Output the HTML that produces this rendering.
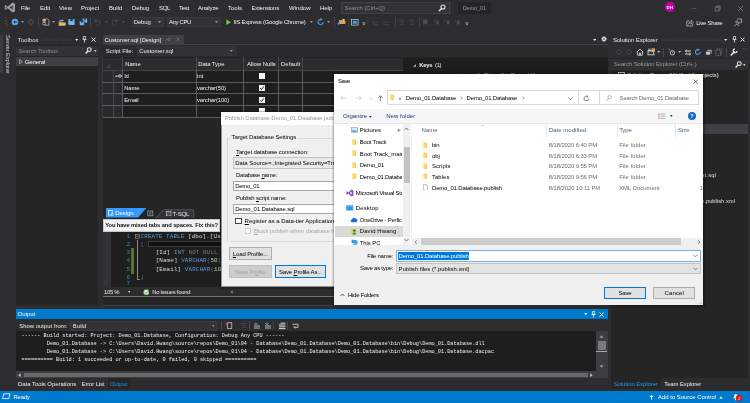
<!DOCTYPE html>
<html lang="en"><head><meta charset="utf-8"><title>Visual Studio - Save</title>
<style>
html,body{margin:0;padding:0;}
body{width:750px;height:403px;overflow:hidden;background:#2d2d30;position:relative;font-family:"Liberation Sans",sans-serif;}
#r{position:absolute;left:0;top:0;width:750px;height:403px;overflow:hidden;will-change:transform;}
#r div,#r svg,#r span.t{position:absolute;}
span.t{white-space:pre;}
span.t u{text-decoration-thickness:0.5px;text-underline-offset:0.6px;}
.s{font-family:"Liberation Sans",sans-serif;}
.m{font-family:"Liberation Mono",monospace;}
</style></head>
<body><div id="r">
<svg style="left:4px;top:2px;" width="12" height="11" viewBox="0 0 12 11"><path d="M8.6 0.6 L11 1.7 V9.3 L8.6 10.4 L3.6 6.3 L1.6 7.9 L0.8 7.5 V3.5 L1.6 3.1 L3.6 4.7 Z M8.6 3.4 L5.6 5.5 L8.6 7.6 Z M1.7 4.4 V6.6 L2.9 5.5 Z" fill="#9b9ba3" fill-rule="evenodd"/></svg>
<span class="t s" style="left:21px;top:4px;font-size:6.01px;line-height:8px;color:#f0f0f0;letter-spacing:-0.168px;">File</span>
<span class="t s" style="left:40px;top:4px;font-size:6.01px;line-height:8px;color:#f0f0f0;letter-spacing:-0.086px;">Edit</span>
<span class="t s" style="left:59px;top:4px;font-size:6.01px;line-height:8px;color:#f0f0f0;letter-spacing:0.023px;">View</span>
<span class="t s" style="left:81px;top:4px;font-size:6.01px;line-height:8px;color:#f0f0f0;letter-spacing:-0.098px;">Project</span>
<span class="t s" style="left:109px;top:4px;font-size:6.01px;line-height:8px;color:#f0f0f0;letter-spacing:-0.069px;">Build</span>
<span class="t s" style="left:132px;top:4px;font-size:6.01px;line-height:8px;color:#f0f0f0;letter-spacing:-0.138px;">Debug</span>
<span class="t s" style="left:159px;top:4px;font-size:6.01px;line-height:8px;color:#f0f0f0;letter-spacing:-0.339px;">SQL</span>
<span class="t s" style="left:179px;top:4px;font-size:6.01px;line-height:8px;color:#f0f0f0;letter-spacing:-0.254px;">Test</span>
<span class="t s" style="left:198px;top:4px;font-size:6.01px;line-height:8px;color:#f0f0f0;letter-spacing:-0.123px;">Analyze</span>
<span class="t s" style="left:228px;top:4px;font-size:6.01px;line-height:8px;color:#f0f0f0;letter-spacing:-0.003px;">Tools</span>
<span class="t s" style="left:251.5px;top:4px;font-size:6.01px;line-height:8px;color:#f0f0f0;letter-spacing:-0.186px;">Extensions</span>
<span class="t s" style="left:289px;top:4px;font-size:6.01px;line-height:8px;color:#f0f0f0;letter-spacing:0.026px;">Window</span>
<span class="t s" style="left:320px;top:4px;font-size:6.01px;line-height:8px;color:#f0f0f0;letter-spacing:-0.086px;">Help</span>
<div style="left:341px;top:2px;width:109px;height:11.5px;background:#333337;border:0.6px solid #404044;box-sizing:border-box;"></div>
<span class="t s" style="left:344.5px;top:4px;font-size:6.01px;line-height:8px;color:#8f8f8f;letter-spacing:-0.113px;">Search (Ctrl+Q)</span>
<svg style="left:438px;top:4px;" width="8" height="8" viewBox="0 0 8 8"><circle cx="5" cy="3" r="2" fill="none" stroke="#e8e8e8" stroke-width="1.1"/><path d="M3.6 4.4 L1 7" stroke="#e8e8e8" stroke-width="1.4"/></svg>
<div style="left:458px;top:2px;width:32.5px;height:11.5px;background:#252527;"></div>
<span class="t s" style="left:462.5px;top:4px;font-size:5.82px;line-height:8px;color:#9a9a9a;letter-spacing:-0.243px;">Demo_01</span>
<div style="left:664.5px;top:1.8px;width:10.4px;height:10.4px;background:#c200aa;border-radius:50%;"></div>
<span class="t s" style="left:666.6px;top:4px;font-size:4.4px;line-height:8px;color:#ffffff;font-weight:bold;letter-spacing:0.028px;">DH</span>
<svg style="left:690px;top:3.5px;" width="8" height="9" viewBox="0 0 8 9"><path d="M1.5 4.5 H6.5" stroke="#5a5a5e" stroke-width="0.8"/></svg>
<svg style="left:713px;top:3.6px;" width="9" height="9" viewBox="0 0 9 9"><path d="M2.2 3.2 H6 V7 H2.2 Z M3.4 3.2 V2 H7.2 V5.8 H6" fill="none" stroke="#8a8a8e" stroke-width="0.7"/></svg>
<svg style="left:736px;top:3.8px;" width="9" height="9" viewBox="0 0 9 9"><path d="M2 2 L7 7 M7 2 L2 7" stroke="#8a8a8e" stroke-width="0.7"/></svg>
<svg style="left:5px;top:17px;" width="3" height="10" viewBox="0 0 3 10"><g fill="#55555a"><rect x="0" y="0" width="1" height="1"/><rect x="1.5" y="1.5" width="1" height="1"/><rect x="0" y="3" width="1" height="1"/><rect x="1.5" y="4.5" width="1" height="1"/><rect x="0" y="6" width="1" height="1"/><rect x="1.5" y="7.5" width="1" height="1"/></g></svg>
<svg style="left:10.6px;top:17.6px;" width="8" height="8" viewBox="0 0 8 8"><circle cx="4" cy="4" r="3.3" fill="#58aaf0"/><path d="M4 2.3 L2.3 4 L4 5.7 Z" fill="#23272e"/><path d="M3.6 4 H6.2" stroke="#23272e" stroke-width="0.9"/></svg>
<svg style="left:21.1px;top:20.900000000000002px;" width="3" height="2.1" viewBox="0 0 3 2.1"><path d="M0 0 H3 L1.5 2 Z" fill="#9a9a9a"/></svg>
<svg style="left:27.5px;top:18.7px;" width="6" height="6" viewBox="0 0 6 6"><circle cx="3" cy="3" r="2.2" fill="none" stroke="#55555a" stroke-width="1"/></svg>
<div style="left:38px;top:17px;width:0.7px;height:10px;background:#424246;"></div>
<svg style="left:41.5px;top:17.8px;" width="8" height="9" viewBox="0 0 8 9"><path d="M3.4 0.9 H5.6 L6.9 2.2 V7.2 H2.6 V4" fill="none" stroke="#c8c8c8" stroke-width="0.7"/><circle cx="2.2" cy="2.2" r="1.7" fill="#e0ac62"/><rect x="0.8" y="4.6" width="2.4" height="2.2" fill="#2d2d30" stroke="#c0c0c0" stroke-width="0.6"/></svg>
<svg style="left:51.7px;top:20.900000000000002px;" width="3" height="2.1" viewBox="0 0 3 2.1"><path d="M0 0 H3 L1.5 2 Z" fill="#9a9a9a"/></svg>
<svg style="left:57.5px;top:18px;" width="9" height="9" viewBox="0 0 9 9"><path d="M0.6 3.4 H3 L3.8 4.2 H7.4 V7.6 H0.6 Z" fill="#c8963e"/><path d="M1.8 5.2 H8.2 L7.2 7.6 H0.6 Z" fill="#e6bd78"/><path d="M1.4 3.2 V2 H3.8 V0.9 L5.8 2.5 L3.8 4.1 V3 H2.4 V3.2 Z" fill="#5fb0f5"/></svg>
<svg style="left:68.4px;top:18.8px;" width="7" height="6.4" viewBox="0 0 7 6.4"><path d="M0.2 0.3 H6.6 V6 H1.2 L0.2 5 Z" fill="#6ab8f7"/><rect x="2.2" y="0.3" width="2.6" height="1.7" fill="#2d2d30"/></svg>
<svg style="left:78.5px;top:18px;" width="9" height="8.4" viewBox="0 0 9 8.4"><path d="M3.6 0.5 H8.2 V4.6 H3.6 Z" fill="#6ab8f7"/><rect x="5" y="0.5" width="1.9" height="1.3" fill="#2d2d30"/><path d="M0.4 2.9 H5.2 V7.6 H1.2 L0.4 6.8 Z" fill="#6ab8f7" stroke="#2d2d30" stroke-width="0.6"/><rect x="1.9" y="3" width="1.9" height="1.4" fill="#2d2d30"/></svg>
<div style="left:90.2px;top:17px;width:0.7px;height:10px;background:#424246;"></div>
<svg style="left:93.5px;top:18px;" width="7" height="8" viewBox="0 0 7 8"><path d="M1 1 V3.4 H3.4 M1.2 3.2 C3 1.2 5.8 2 5.8 4.2 C5.8 5.6 4.8 6.6 3.4 7.2" fill="none" stroke="#505055" stroke-width="0.9"/></svg>
<svg style="left:104.8px;top:20.900000000000002px;" width="3" height="2.1" viewBox="0 0 3 2.1"><path d="M0 0 H3 L1.5 2 Z" fill="#55555a"/></svg>
<svg style="left:111px;top:18px;" width="7" height="8" viewBox="0 0 7 8"><path d="M6 1 V3.4 H3.6 M5.8 3.2 C4 1.2 1.2 2 1.2 4.2 C1.2 5.6 2.2 6.6 3.6 7.2" fill="none" stroke="#505055" stroke-width="0.9"/></svg>
<svg style="left:121.8px;top:20.900000000000002px;" width="3" height="2.1" viewBox="0 0 3 2.1"><path d="M0 0 H3 L1.5 2 Z" fill="#55555a"/></svg>
<div style="left:132px;top:17px;width:32px;height:10px;background:#333337;border:0.5px solid #3a3a3e;box-sizing:border-box;"></div>
<span class="t s" style="left:133.8px;top:18px;font-size:5.92px;line-height:8px;color:#f0f0f0;letter-spacing:-0.121px;">Debug</span>
<svg style="left:158.0px;top:20.900000000000002px;" width="3" height="2.1" viewBox="0 0 3 2.1"><path d="M0 0 H3 L1.5 2 Z" fill="#9a9a9a"/></svg>
<div style="left:167px;top:17px;width:54px;height:10px;background:#333337;border:0.5px solid #3a3a3e;box-sizing:border-box;"></div>
<span class="t s" style="left:169px;top:18px;font-size:5.92px;line-height:8px;color:#f0f0f0;letter-spacing:-0.328px;">Any CPU</span>
<svg style="left:215.0px;top:20.900000000000002px;" width="3" height="2.1" viewBox="0 0 3 2.1"><path d="M0 0 H3 L1.5 2 Z" fill="#9a9a9a"/></svg>
<svg style="left:225.5px;top:18.5px;" width="5.5" height="6.5" viewBox="0 0 5.5 6.5"><path d="M0.3 0.3 L5 3.2 L0.3 6.1 Z" fill="#6cc04a"/></svg>
<span class="t s" style="left:233.5px;top:18px;font-size:5.92px;line-height:8px;color:#f0f0f0;letter-spacing:-0.203px;">IIS Express (Google Chrome)</span>
<svg style="left:309.5px;top:20.900000000000002px;" width="3" height="2.1" viewBox="0 0 3 2.1"><path d="M0 0 H3 L1.5 2 Z" fill="#9a9a9a"/></svg>
<svg style="left:316.5px;top:18px;" width="8" height="8" viewBox="0 0 8 8"><path d="M6.2 4 A2.6 2.6 0 1 1 4 1.4" fill="none" stroke="#4ba0e8" stroke-width="1.1"/><path d="M3.4 0 L5.8 1.5 L3.4 3 Z" fill="#4ba0e8"/></svg>
<svg style="left:326.5px;top:20.900000000000002px;" width="3" height="2.1" viewBox="0 0 3 2.1"><path d="M0 0 H3 L1.5 2 Z" fill="#9a9a9a"/></svg>
<div style="left:333.5px;top:17px;width:0.7px;height:10px;background:#424246;"></div>
<svg style="left:336.5px;top:17.5px;" width="9" height="9" viewBox="0 0 9 9"><path d="M2 2 H5 L5.6 2.8 H8.4 V6 H2 Z" fill="#d9a550"/><path d="M0.6 5 L3 3.4 L3.6 4.6 L1.4 7.4 Z" fill="#4ba0e8"/><circle cx="6.6" cy="2" r="1.2" fill="#e9c27c"/></svg>
<div style="left:347.5px;top:17px;width:0.7px;height:10px;background:#424246;"></div>
<svg style="left:351px;top:18.5px;" width="8" height="7" viewBox="0 0 8 7"><rect x="0.5" y="0.5" width="6.6" height="5.6" fill="none" stroke="#d8d8d8" stroke-width="0.7"/><rect x="1.8" y="1.8" width="4" height="3" fill="#4ba0e8"/></svg>
<svg style="left:361.5px;top:22px;" width="4" height="4" viewBox="0 0 4 4"><path d="M0.5 0.5 H3.3" stroke="#b0b0b0" stroke-width="0.6"/><path d="M0.4 1.6 H3.4 L1.9 3.4 Z" fill="#b0b0b0"/></svg>
<svg style="left:366.5px;top:17px;" width="3" height="10" viewBox="0 0 3 10"><g fill="#4a4a4f"><rect x="0" y="0" width="1" height="1"/><rect x="1.5" y="1.5" width="1" height="1"/><rect x="0" y="3" width="1" height="1"/><rect x="1.5" y="4.5" width="1" height="1"/><rect x="0" y="6" width="1" height="1"/><rect x="1.5" y="7.5" width="1" height="1"/></g></svg>
<svg style="left:372px;top:18.5px;" width="7" height="7" viewBox="0 0 7 7"><path d="M1 1 V5.8 H6.4 M2.4 3.4 H6" fill="none" stroke="#4c4c51" stroke-width="0.8"/></svg>
<svg style="left:383px;top:18.5px;" width="7" height="7" viewBox="0 0 7 7"><path d="M1 1 V5.8 H6.4 M2.4 3.4 H6" fill="none" stroke="#4c4c51" stroke-width="0.8"/></svg>
<div style="left:394.5px;top:17px;width:0.7px;height:10px;background:#424246;"></div>
<svg style="left:398px;top:18.5px;" width="7" height="7" viewBox="0 0 7 7"><path d="M1 1.2 H6 M2.4 3.2 H6 M2.4 5.2 H6" fill="none" stroke="#4c4c51" stroke-width="0.8"/></svg>
<svg style="left:407.5px;top:18.5px;" width="7" height="7" viewBox="0 0 7 7"><path d="M1 1.2 H6 M2.4 3.2 H6 M2.4 5.2 H6" fill="none" stroke="#4c4c51" stroke-width="0.8"/></svg>
<div style="left:419px;top:17px;width:0.7px;height:10px;background:#424246;"></div>
<svg style="left:422px;top:18.5px;" width="7" height="7" viewBox="0 0 7 7"><path d="M1 0.6 H5.4 V6.2 L3.2 4.6 L1 6.2 Z" fill="#4c4c51"/></svg>
<svg style="left:433px;top:18.5px;" width="7" height="7" viewBox="0 0 7 7"><path d="M3 1.4 H5.6 V6 L4.3 5 L3 6 Z" fill="#4c4c51"/><path d="M0.8 1 H2.2 M0.8 2.4 H1.8" stroke="#5a5a5e" stroke-width="0.6"/></svg>
<svg style="left:443.5px;top:18.5px;" width="7" height="7" viewBox="0 0 7 7"><path d="M3 1.4 H5.6 V6 L4.3 5 L3 6 Z" fill="#4c4c51"/><path d="M0.8 1 H2.2 M0.8 2.4 H1.8" stroke="#5a5a5e" stroke-width="0.6"/></svg>
<svg style="left:454px;top:18.5px;" width="7" height="7" viewBox="0 0 7 7"><path d="M3 1.4 H5.6 V6 L4.3 5 L3 6 Z" fill="#4c4c51"/><path d="M0.8 1 H2.2 M0.8 2.4 H1.8" stroke="#5a5a5e" stroke-width="0.6"/></svg>
<svg style="left:464.5px;top:22px;" width="4" height="4" viewBox="0 0 4 4"><path d="M0.5 0.5 H3.3" stroke="#b0b0b0" stroke-width="0.6"/><path d="M0.4 1.6 H3.4 L1.9 3.4 Z" fill="#b0b0b0"/></svg>
<svg style="left:685.5px;top:18.6px;" width="8" height="8" viewBox="0 0 8 8"><path d="M3.4 2 H0.8 V7 H6.4 V5.2" fill="none" stroke="#d0d0d0" stroke-width="0.7"/><path d="M2.6 5.2 C2.8 3.4 4 2.6 5.4 2.6 V1.2 L7.4 3.2 L5.4 5.2 V3.8 C4.2 3.8 3.4 4.2 2.6 5.2 Z" fill="none" stroke="#d0d0d0" stroke-width="0.6"/></svg>
<span class="t s" style="left:696.2px;top:19px;font-size:6.01px;line-height:8px;color:#f0f0f0;letter-spacing:-0.259px;">Live Share</span>
<svg style="left:733.5px;top:18px;" width="9" height="9" viewBox="0 0 9 9"><path d="M3.2 1 H7.6 V4.4 H6 L4.6 5.6 V4.4" fill="none" stroke="#c8c8c8" stroke-width="0.7"/><circle cx="2.8" cy="4" r="1.1" fill="none" stroke="#c8c8c8" stroke-width="0.7"/><path d="M0.8 8 C0.8 6 4.8 6 4.8 8" fill="none" stroke="#c8c8c8" stroke-width="0.7"/></svg>
<div style="left:0px;top:34.7px;width:3.3px;height:38.7px;background:#3a3a3f;"></div>
<span class="t s" style="left:0px;top:-4px;font-size:5.82px;line-height:8px;color:#d4d4d4;left:11.6px;top:35.3px;transform-origin:0 0;transform:rotate(90deg);letter-spacing:-0.1px;">Server Explorer</span>
<div style="left:16.4px;top:34.7px;width:81.9px;height:270px;background:#252526;"></div>
<div style="left:16.4px;top:34.7px;width:81.9px;height:10.6px;background:#2d2d30;"></div>
<span class="t s" style="left:17.7px;top:36px;font-size:6.01px;line-height:8px;color:#e0e0e0;letter-spacing:0.030px;">Toolbox</span>
<div style="left:42px;top:38.4px;width:30px;height:2.4px;background:radial-gradient(circle,#46464a 0.35px,transparent 0.5px) 0 0/2.4px 2.4px,radial-gradient(circle,#46464a 0.35px,transparent 0.5px) 1.2px 1.2px/2.4px 2.4px;"></div>
<svg style="left:74.6px;top:38.9px;" width="3.4" height="2.1" viewBox="0 0 3.4 2.1"><path d="M0 0 H3.4 L1.7 2 Z" fill="#e0e0e0"/></svg>
<svg style="left:81.8px;top:36.3px;" width="5" height="7" viewBox="0 0 5 7"><path d="M1.4 0.6 H3.6 V3.4 H1.4 Z M0.6 3.6 H4.4 M2.5 3.6 V6.6" fill="none" stroke="#e0e0e0" stroke-width="0.8"/></svg>
<svg style="left:90.6px;top:37.3px;" width="5.2" height="5.2" viewBox="0 0 5.2 5.2"><path d="M0.6 0.6 L4.6000000000000005 4.6000000000000005 M4.6000000000000005 0.6 L0.6 4.6000000000000005" stroke="#e0e0e0" stroke-width="1"/></svg>
<div style="left:16.4px;top:45.6px;width:81.9px;height:10.2px;background:#333337;"></div>
<span class="t s" style="left:18.2px;top:47px;font-size:5.92px;line-height:8px;color:#8a8a8a;letter-spacing:-0.058px;">Search Toolbox</span>
<svg style="left:84.5px;top:47.3px;" width="7" height="7" viewBox="0 0 7 7"><circle cx="4.3" cy="2.6" r="1.9" fill="none" stroke="#e8e8e8" stroke-width="1.1"/><path d="M3 3.9 L0.6 6.4" stroke="#e8e8e8" stroke-width="1.4"/></svg>
<svg style="left:94.0px;top:49.9px;" width="2.6" height="2.1" viewBox="0 0 2.6 2.1"><path d="M0 0 H2.6 L1.3 2 Z" fill="#d0d0d0"/></svg>
<div style="left:16.4px;top:57px;width:81.9px;height:9.2px;background:#3f3f46;"></div>
<svg style="left:18.8px;top:59px;" width="4" height="5.4" viewBox="0 0 4 5.4"><path d="M0.5 0.5 L3.3 2.7 L0.5 4.9 Z" fill="none" stroke="#d0d0d0" stroke-width="0.6"/></svg>
<span class="t s" style="left:24.8px;top:58px;font-size:6.01px;line-height:8px;color:#f6f6f6;letter-spacing:-0.137px;">General</span>
<div style="left:102.7px;top:34.7px;width:81.3px;height:9.3px;background:#3f3f46;"></div>
<span class="t s" style="left:104.6px;top:36px;font-size:6.01px;line-height:8px;color:#f0f0f0;letter-spacing:-0.110px;">Customer.sql [Design]</span>
<svg style="left:166.3px;top:37px;" width="5" height="5" viewBox="0 0 5 5"><path d="M0.4 2.4 H2 M2 1 V3.8 M2 1.4 H4.2 V3.4 H2" fill="none" stroke="#77777c" stroke-width="0.6"/></svg>
<svg style="left:175.6px;top:37.4px;" width="4.6" height="4.6" viewBox="0 0 4.6 4.6"><path d="M0.6 0.6 L4.0 4.0 M4.0 0.6 L0.6 4.0" stroke="#77777c" stroke-width="0.7"/></svg>
<div style="left:102.7px;top:43.7px;width:505px;height:0.8px;background:#3f3f46;"></div>
<svg style="left:593.0px;top:38.9px;" width="3.4" height="2.1" viewBox="0 0 3.4 2.1"><path d="M0 0 H3.4 L1.7 2 Z" fill="#e0e0e0"/></svg>
<svg style="left:601.2px;top:36.4px;" width="6" height="6" viewBox="0 0 6 6"><circle cx="3" cy="3" r="1.5" fill="none" stroke="#e4e4e4" stroke-width="1.3"/><circle cx="3" cy="3" r="2.4" fill="none" stroke="#e4e4e4" stroke-width="0.7" stroke-dasharray="0.9 0.7"/></svg>
<div style="left:102.7px;top:44.5px;width:505px;height:12.3px;background:#2b2b2e;"></div>
<span class="t s" style="left:105.8px;top:47px;font-size:6.01px;line-height:8px;color:#ececec;letter-spacing:-0.095px;">Script File:</span>
<div style="left:137px;top:46px;width:99.5px;height:10px;background:#333337;"></div>
<span class="t s" style="left:139.3px;top:47px;font-size:5.82px;line-height:8px;color:#ececec;letter-spacing:0.007px;">Customer.sql</span>
<svg style="left:230.2px;top:50.1px;" width="2.8" height="2.1" viewBox="0 0 2.8 2.1"><path d="M0 0 H2.8 L1.4 2 Z" fill="#9a9a9a"/></svg>
<div style="left:102.7px;top:57px;width:300.5px;height:151px;background:#252526;"></div>
<div style="left:403.2px;top:57px;width:204.5px;height:151px;background:#1d1d1e;"></div>
<div style="left:102.7px;top:57px;width:300.5px;height:13.3px;background:#2c2c2f;"></div>
<div style="left:102.7px;top:56.5px;width:505px;height:0.8px;background:#232325;"></div>
<svg style="left:105px;top:62.5px;" width="6" height="6" viewBox="0 0 6 6"><path d="M5 0.6 V5 H0.6 Z" fill="#3f3f44"/></svg>
<div style="left:123px;top:70.3px;width:280.2px;height:46.7px;background:#1e1e1e;"></div>
<div style="left:102.7px;top:70.3px;width:20.3px;height:46.7px;background:#2a2a2c;"></div>
<div style="left:102.7px;top:69.8px;width:300.5px;height:0.9px;background:#454547;"></div>
<div style="left:102.7px;top:81.5px;width:300.5px;height:0.9px;background:#5d5d5f;"></div>
<div style="left:102.7px;top:93.3px;width:300.5px;height:0.9px;background:#5d5d5f;"></div>
<div style="left:102.7px;top:105.1px;width:300.5px;height:0.9px;background:#5d5d5f;"></div>
<div style="left:102.7px;top:116.6px;width:300.5px;height:0.9px;background:#5d5d5f;"></div>
<div style="left:112.5px;top:70.2px;width:0.9px;height:46.8px;background:#4a4a4d;"></div>
<div style="left:122.19999999999999px;top:57px;width:0.9px;height:13.2px;background:#48484a;"></div>
<div style="left:122.19999999999999px;top:70.2px;width:0.9px;height:46.8px;background:#5d5d5f;"></div>
<div style="left:195.5px;top:57px;width:0.9px;height:13.2px;background:#48484a;"></div>
<div style="left:195.5px;top:70.2px;width:0.9px;height:46.8px;background:#5d5d5f;"></div>
<div style="left:243.2px;top:57px;width:0.9px;height:13.2px;background:#48484a;"></div>
<div style="left:243.2px;top:70.2px;width:0.9px;height:46.8px;background:#5d5d5f;"></div>
<div style="left:278.0px;top:57px;width:0.9px;height:13.2px;background:#48484a;"></div>
<div style="left:278.0px;top:70.2px;width:0.9px;height:46.8px;background:#5d5d5f;"></div>
<div style="left:302.0px;top:57px;width:0.9px;height:13.2px;background:#48484a;"></div>
<div style="left:302.0px;top:70.2px;width:0.9px;height:46.8px;background:#5d5d5f;"></div>
<div style="left:102.4px;top:57px;width:0.7px;height:60px;background:#3c3c3f;"></div>
<span class="t s" style="left:125.2px;top:60px;font-size:5.92px;line-height:8px;color:#f0f0f0;letter-spacing:-0.066px;">Name</span>
<span class="t s" style="left:198.2px;top:60px;font-size:5.92px;line-height:8px;color:#f0f0f0;letter-spacing:-0.070px;">Data Type</span>
<span class="t s" style="left:247px;top:60px;font-size:5.92px;line-height:8px;color:#f0f0f0;letter-spacing:-0.008px;">Allow Nulls</span>
<span class="t s" style="left:280.8px;top:60px;font-size:5.92px;line-height:8px;color:#f0f0f0;letter-spacing:0.140px;">Default</span>
<svg style="left:115px;top:73.8px;" width="7" height="4" viewBox="0 0 7 4"><circle cx="5" cy="2" r="1.3" fill="none" stroke="#e0e0e0" stroke-width="0.9"/><path d="M0.4 2 H3.8 M1.2 2 V3.2" stroke="#e0e0e0" stroke-width="0.8"/></svg>
<span class="t s" style="left:124.2px;top:72px;font-size:5.92px;line-height:8px;color:#f0f0f0;letter-spacing:-0.269px;">Id</span>
<span class="t s" style="left:124.2px;top:84px;font-size:5.92px;line-height:8px;color:#f0f0f0;letter-spacing:-0.116px;">Name</span>
<span class="t s" style="left:124.2px;top:96px;font-size:5.92px;line-height:8px;color:#f0f0f0;letter-spacing:-0.076px;">Email</span>
<span class="t s" style="left:197px;top:72px;font-size:5.92px;line-height:8px;color:#f0f0f0;letter-spacing:0.117px;">int</span>
<span class="t s" style="left:197px;top:84px;font-size:5.92px;line-height:8px;color:#f0f0f0;letter-spacing:-0.118px;">varchar(50)</span>
<span class="t s" style="left:197px;top:96px;font-size:5.92px;line-height:8px;color:#f0f0f0;letter-spacing:-0.115px;">varchar(100)</span>
<svg style="left:258.6px;top:73.1px;" width="6.2" height="6.2" viewBox="0 0 6.2 6.2"><rect x="0" y="0" width="6.2" height="6.2" fill="#f4f4f4"/></svg>
<svg style="left:258.6px;top:85px;" width="6.2" height="6.2" viewBox="0 0 6.2 6.2"><rect x="0" y="0" width="6.2" height="6.2" fill="#f4f4f4"/><path d="M1.3 3.1 L2.6 4.5 L4.9 1.3" fill="none" stroke="#1a1a1a" stroke-width="0.9"/></svg>
<svg style="left:258.6px;top:96.7px;" width="6.2" height="6.2" viewBox="0 0 6.2 6.2"><rect x="0" y="0" width="6.2" height="6.2" fill="#f4f4f4"/><path d="M1.3 3.1 L2.6 4.5 L4.9 1.3" fill="none" stroke="#1a1a1a" stroke-width="0.9"/></svg>
<svg style="left:258.6px;top:108.4px;" width="6.2" height="6.2" viewBox="0 0 6.2 6.2"><rect x="0" y="0" width="6.2" height="6.2" fill="#f4f4f4"/></svg>
<svg style="left:412.6px;top:63.6px;" width="3" height="3" viewBox="0 0 3 3"><path d="M2.8 0.2 V2.8 H0.2 Z" fill="#d0d0d0"/></svg>
<span class="t s" style="left:419.3px;top:61px;font-size:5.92px;line-height:8px;color:#f0f0f0;font-weight:bold;letter-spacing:-0.306px;">Keys</span>
<span class="t s" style="left:435px;top:61px;font-size:5.92px;line-height:8px;color:#ececec;letter-spacing:-0.340px;">(1)</span>
<span class="t s" style="left:457px;top:71px;font-size:5.73px;line-height:8px;color:#b8b8b8;letter-spacing:-0.662px;">&lt;unnamed&gt;  (Primary Key, Clustered: Id)</span>
<div style="left:102.7px;top:208px;width:505px;height:10.4px;background:#252526;"></div>
<svg style="left:106px;top:208.2px;" width="42" height="9.6" viewBox="0 0 42 9.6"><path d="M0 0 H40.4 L32 9.6 H0 Z" fill="#3399ff"/></svg>
<svg style="left:107.6px;top:210px;" width="6" height="6" viewBox="0 0 6 6"><rect x="0.6" y="0.6" width="3.6" height="4.4" fill="none" stroke="#ffffff" stroke-width="0.7"/><circle cx="4.2" cy="4.4" r="1.1" fill="#3399ff" stroke="#fff" stroke-width="0.6"/></svg>
<span class="t s" style="left:115.3px;top:209px;font-size:6.1px;line-height:8px;color:#ffffff;letter-spacing:-0.128px;">Design</span>
<svg style="left:147.2px;top:209.6px;" width="7" height="7" viewBox="0 0 7 7"><rect x="0.8" y="1" width="5" height="4.8" fill="none" stroke="#a8a8a8" stroke-width="0.7"/><path d="M2.4 2.4 L4 2.4 L4 4 M4.2 4.6 L2.6 4.6 L2.6 3.2" fill="none" stroke="#a8a8a8" stroke-width="0.5"/></svg>
<svg style="left:155px;top:208.6px;" width="40" height="9.8" viewBox="0 0 40 9.8"><path d="M0.3 9.6 L8.2 0.8 H37.5 Q38.8 0.8 38.8 2 V9.6" fill="#333337" stroke="#6a6a6e" stroke-width="0.7"/></svg>
<svg style="left:166.2px;top:210.6px;" width="5.6" height="5.6" viewBox="0 0 5.6 5.6"><rect x="0.5" y="0.5" width="4.4" height="4.4" fill="none" stroke="#c8c8c8" stroke-width="0.7"/><path d="M1.4 3.8 L3.8 1.4 M1.4 1.6 H2.4" stroke="#c8c8c8" stroke-width="0.5"/></svg>
<span class="t s" style="left:172.6px;top:210px;font-size:6.1px;line-height:8px;color:#ececec;letter-spacing:-0.182px;">T-SQL</span>
<div style="left:102.7px;top:218.4px;width:505px;height:69px;background:#1e1e1e;"></div>
<div style="left:102.7px;top:218.4px;width:8.6px;height:69px;background:#333337;"></div>
<div style="left:131.2px;top:247.6px;width:2.8px;height:26.3px;background:#56732f;"></div>
<div style="left:137.4px;top:239.5px;width:0.6px;height:40.4px;background:#8a8a8a;"></div>
<div style="left:137.4px;top:279.4px;width:2.2px;height:0.6px;background:#8a8a8a;"></div>
<svg style="left:135.3px;top:234.2px;" width="5" height="5" viewBox="0 0 5 5"><rect x="0.4" y="0.4" width="4" height="4" fill="#1e1e1e" stroke="#9a9a9a" stroke-width="0.6"/><path d="M1.2 2.4 H3.6" stroke="#c0c0c0" stroke-width="0.6"/></svg>
<div style="left:148.1px;top:240.8px;width:459.6px;height:6.2px;background:#0f0f10;border:0.6px solid #3c3c3e;box-sizing:border-box;"></div>
<span class="t m" style="left:126.4px;top:233px;font-size:5.9px;line-height:8px;color:#2b91af;letter-spacing:0.053px;">1</span>
<span class="t m" style="left:126.4px;top:241px;font-size:5.9px;line-height:8px;color:#2b91af;letter-spacing:0.053px;">2</span>
<span class="t m" style="left:126.4px;top:249px;font-size:5.9px;line-height:8px;color:#2b91af;letter-spacing:0.053px;">3</span>
<span class="t m" style="left:126.4px;top:257px;font-size:5.9px;line-height:8px;color:#2b91af;letter-spacing:0.053px;">4</span>
<span class="t m" style="left:126.4px;top:266px;font-size:5.9px;line-height:8px;color:#2b91af;letter-spacing:0.053px;">5</span>
<span class="t m" style="left:126.4px;top:274px;font-size:5.9px;line-height:8px;color:#2b91af;letter-spacing:0.053px;">6</span>
<span class="t m" style="left:126.4px;top:280px;font-size:5.9px;line-height:8px;color:#2b91af;letter-spacing:0.053px;">7</span>
<span class="t m" style="left:140.6px;top:233px;font-size:5.9px;line-height:8px;color:#d8d8d8;letter-spacing:0.11px;"><span style="color:#569cd6">CREATE TABLE </span><span style="color:#d8d8d8">[dbo].[Users]</span></span>
<span class="t m" style="left:140.6px;top:241px;font-size:5.9px;line-height:8px;color:#d8d8d8;letter-spacing:0.11px;"><span style="color:#7a7a7a">(</span></span>
<span class="t m" style="left:155.7px;top:249px;font-size:5.9px;line-height:8px;color:#d8d8d8;letter-spacing:0.11px;"><span style="color:#d8d8d8">[Id] </span><span style="color:#569cd6">INT </span><span style="color:#7a7a7a">NOT NULL PRIMARY KEY</span><span style="color:#7a7a7a">,</span></span>
<span class="t m" style="left:155.7px;top:257px;font-size:5.9px;line-height:8px;color:#d8d8d8;letter-spacing:0.11px;"><span style="color:#d8d8d8">[Name] </span><span style="color:#569cd6">VARCHAR</span><span style="color:#7a7a7a">(</span><span style="color:#b5cea8">50</span><span style="color:#7a7a7a">) </span><span style="color:#7a7a7a">NULL</span><span style="color:#7a7a7a">,</span></span>
<span class="t m" style="left:155.7px;top:266px;font-size:5.9px;line-height:8px;color:#d8d8d8;letter-spacing:0.11px;"><span style="color:#d8d8d8">[Email] </span><span style="color:#569cd6">VARCHAR</span><span style="color:#7a7a7a">(</span><span style="color:#b5cea8">100</span><span style="color:#7a7a7a">) </span><span style="color:#7a7a7a">NULL</span></span>
<span class="t m" style="left:140.6px;top:274px;font-size:5.9px;line-height:8px;color:#d8d8d8;letter-spacing:0.11px;"><span style="color:#7a7a7a">)</span></span>
<div style="left:102.8px;top:218.8px;width:117.6px;height:13px;background:#f2f2f2;border:0.5px solid #c8c8c8;box-sizing:border-box;"></div>
<span class="t s" style="left:105.2px;top:221px;font-size:5.73px;line-height:8px;color:#101010;font-weight:bold;letter-spacing:-0.076px;">You have mixed tabs and spaces. Fix this?</span>
<div style="left:102.7px;top:287px;width:505px;height:8.6px;background:#2d2d30;"></div>
<span class="t s" style="left:104px;top:288px;font-size:5.82px;line-height:8px;color:#ececec;letter-spacing:-0.257px;">105 %</span>
<svg style="left:127.89999999999999px;top:291.3px;" width="2.6" height="2.1" viewBox="0 0 2.6 2.1"><path d="M0 0 H2.6 L1.3 2 Z" fill="#d0d0d0"/></svg>
<svg style="left:142.6px;top:288.6px;" width="6.6" height="6.6" viewBox="0 0 6.6 6.6"><circle cx="3.3" cy="3.3" r="3" fill="#5cb85c"/><circle cx="3.3" cy="3.3" r="2.2" fill="#e8f5e0"/><path d="M1.9 3.3 L2.9 4.4 L4.7 2.2" fill="none" stroke="#2e7d32" stroke-width="0.8"/></svg>
<span class="t s" style="left:152.2px;top:288px;font-size:5.82px;line-height:8px;color:#ececec;letter-spacing:-0.246px;">No issues found</span>
<svg style="left:229.5px;top:290px;" width="3" height="4" viewBox="0 0 3 4"><path d="M2.6 0.3 V3.7 L0.4 2 Z" fill="#8a8a8a"/></svg>
<div style="left:102.7px;top:295.6px;width:505px;height:9.4px;background:#252526;"></div>
<div style="left:102.7px;top:295.5px;width:505px;height:0.7px;background:#707070;"></div>
<div style="left:102.7px;top:304.8px;width:505px;height:0.8px;background:#3f3f46;"></div>
<div style="left:611.4px;top:34.7px;width:137px;height:355.5px;background:#252526;"></div>
<div style="left:611.4px;top:34.7px;width:137px;height:11.3px;background:#2d2d30;"></div>
<span class="t s" style="left:612.9px;top:36px;font-size:6.01px;line-height:8px;color:#ececec;letter-spacing:-0.059px;">Solution Explorer</span>
<div style="left:661px;top:38.4px;width:60px;height:2.4px;background:radial-gradient(circle,#46464a 0.35px,transparent 0.5px) 0 0/2.4px 2.4px,radial-gradient(circle,#46464a 0.35px,transparent 0.5px) 1.2px 1.2px/2.4px 2.4px;"></div>
<svg style="left:724.3px;top:38.9px;" width="3.4" height="2.1" viewBox="0 0 3.4 2.1"><path d="M0 0 H3.4 L1.7 2 Z" fill="#e0e0e0"/></svg>
<svg style="left:731.6px;top:36.3px;" width="5" height="7" viewBox="0 0 5 7"><path d="M1.4 0.6 H3.6 V3.4 H1.4 Z M0.6 3.6 H4.4 M2.5 3.6 V6.6" fill="none" stroke="#e0e0e0" stroke-width="0.8"/></svg>
<svg style="left:739.8px;top:37.3px;" width="5.2" height="5.2" viewBox="0 0 5.2 5.2"><path d="M0.6 0.6 L4.6000000000000005 4.6000000000000005 M4.6000000000000005 0.6 L0.6 4.6000000000000005" stroke="#e0e0e0" stroke-width="1"/></svg>
<div style="left:611.4px;top:46px;width:137px;height:12.3px;background:#2d2d30;"></div>
<svg style="left:615.5px;top:49px;" width="6" height="6" viewBox="0 0 6 6"><circle cx="3" cy="3" r="2.2" fill="none" stroke="#4a4a4f" stroke-width="0.9"/></svg>
<svg style="left:626.3px;top:49px;" width="6" height="6" viewBox="0 0 6 6"><circle cx="3" cy="3" r="2.2" fill="none" stroke="#4a4a4f" stroke-width="0.9"/></svg>
<svg style="left:635.5px;top:48px;" width="8" height="8" viewBox="0 0 8 8"><path d="M0.6 4.2 L4 1 L7.4 4.2 M1.6 3.6 V7.2 H6.4 V3.6" fill="none" stroke="#e0e0e0" stroke-width="0.8"/><rect x="3.2" y="4.8" width="1.6" height="2.4" fill="#e0e0e0"/></svg>
<svg style="left:646.5px;top:48px;" width="8.5" height="8" viewBox="0 0 8.5 8"><rect x="1" y="2.6" width="5.4" height="4.2" fill="none" stroke="#e0e0e0" stroke-width="0.8"/><rect x="1" y="2.4" width="5.4" height="1" fill="#e0e0e0"/><rect x="1.2" y="0.5" width="2.2" height="1.6" fill="#4ba0e8"/><rect x="4.4" y="0.4" width="3.6" height="3.6" fill="#d9a550"/><rect x="6.4" y="5.8" width="1.7" height="1.6" fill="#4ba0e8"/></svg>
<svg style="left:657.0px;top:51.300000000000004px;" width="3.2" height="2.1" viewBox="0 0 3.2 2.1"><path d="M0 0 H3.2 L1.6 2 Z" fill="#a8a8a8"/></svg>
<div style="left:663.3px;top:47.5px;width:0.7px;height:9.5px;background:#46464a;"></div>
<svg style="left:667.5px;top:48px;" width="8" height="8" viewBox="0 0 8 8"><circle cx="4.4" cy="4.8" r="2.2" fill="none" stroke="#d8d8d8" stroke-width="0.8"/><path d="M4.4 3.6 V4.9 H5.4 M0.6 0.8 L2.4 2.4" stroke="#d8d8d8" stroke-width="0.6" fill="none"/></svg>
<svg style="left:677.6999999999999px;top:51.300000000000004px;" width="3.2" height="2.1" viewBox="0 0 3.2 2.1"><path d="M0 0 H3.2 L1.6 2 Z" fill="#a8a8a8"/></svg>
<svg style="left:683.5px;top:48.5px;" width="8" height="7" viewBox="0 0 8 7"><path d="M7 2 H1.6 M2.7 0.8 L1.3 2 L2.7 3.2 M1 5 H6.4 M5.3 3.8 L6.7 5 L5.3 6.2" fill="none" stroke="#f0f0f0" stroke-width="0.9"/></svg>
<svg style="left:693.6px;top:48.2px;" width="8" height="8" viewBox="0 0 8 8"><path d="M6.2 4 A2.4 2.4 0 1 1 4 1.6" fill="none" stroke="#4ba0e8" stroke-width="1.1"/><path d="M3.4 0.2 L5.8 1.7 L3.4 3.2 Z" fill="#4ba0e8"/></svg>
<svg style="left:704.5px;top:48.5px;" width="8" height="7" viewBox="0 0 8 7"><rect x="2.4" y="0.8" width="4.4" height="3.6" fill="#9a9a9a"/><rect x="0.8" y="2.4" width="4.4" height="3.6" fill="#c8c8c8" stroke="#2d2d30" stroke-width="0.5"/></svg>
<svg style="left:715px;top:48px;" width="8" height="8" viewBox="0 0 8 8"><rect x="2.2" y="0.8" width="4.6" height="5.4" fill="none" stroke="#7a7a7a" stroke-width="0.7" stroke-dasharray="1 0.6"/><rect x="0.8" y="2.2" width="4.6" height="5.2" fill="#2d2d30" stroke="#8a8a8a" stroke-width="0.7" stroke-dasharray="1 0.6"/></svg>
<div style="left:726.3px;top:47.5px;width:0.7px;height:9.5px;background:#46464a;"></div>
<svg style="left:729.5px;top:48px;" width="8" height="8" viewBox="0 0 8 8"><path d="M1.2 7 L4.3 3.9" stroke="#f0f0f0" stroke-width="1.5" stroke-linecap="round"/><path d="M7.1 3 A2 2 0 1 1 4.9 0.8" fill="none" stroke="#f0f0f0" stroke-width="1.3"/></svg>
<svg style="left:743px;top:47.8px;" width="4" height="2" viewBox="0 0 4 2"><circle cx="0.8" cy="0.8" r="0.4" fill="#9a9a9a"/><circle cx="2.6" cy="0.8" r="0.4" fill="#9a9a9a"/></svg>
<div style="left:611.4px;top:58.4px;width:137px;height:11.6px;background:#303034;"></div>
<div style="left:611.4px;top:58.2px;width:137px;height:0.7px;background:#252526;"></div>
<span class="t s" style="left:613.8px;top:60px;font-size:5.92px;line-height:8px;color:#9a9a9a;letter-spacing:-0.072px;">Search Solution Explorer (Ctrl+;)</span>
<svg style="left:734.6px;top:60.7px;" width="7" height="7" viewBox="0 0 7 7"><circle cx="4.3" cy="2.6" r="1.9" fill="none" stroke="#e8e8e8" stroke-width="1.1"/><path d="M3 3.9 L0.6 6.4" stroke="#e8e8e8" stroke-width="1.4"/></svg>
<svg style="left:743.0px;top:63.699999999999996px;" width="2.6" height="2.1" viewBox="0 0 2.6 2.1"><path d="M0 0 H2.6 L1.3 2 Z" fill="#d0d0d0"/></svg>
<svg style="left:617.5px;top:72px;" width="7" height="6" viewBox="0 0 7 6"><rect x="0.5" y="0.5" width="6" height="4.4" fill="none" stroke="#d0d0d0" stroke-width="0.8"/></svg>
<span class="t s" style="left:627px;top:71px;font-size:5.82px;line-height:8px;color:#ececec;letter-spacing:-0.012px;">Solution &#x27;Demo_01&#x27; (2 of 2 projects)</span>
<div style="left:611.4px;top:124.4px;width:137px;height:9.2px;background:#3f3f46;"></div>
<span class="t s" style="left:690px;top:171px;font-size:5.82px;line-height:8px;color:#e0e0e0;letter-spacing:0.249px;">Script.sql</span>
<span class="t s" style="left:652.6px;top:197px;font-size:5.82px;line-height:8px;color:#e0e0e0;letter-spacing:0.000px;">Demo_01.Database.publish.xml</span>
<div style="left:611.4px;top:378.2px;width:137px;height:12px;background:#2d2d30;"></div>
<div style="left:611.4px;top:378.2px;width:49.2px;height:10.6px;background:#252526;"></div>
<span class="t s" style="left:613.7px;top:380px;font-size:5.92px;line-height:8px;color:#1a97f0;letter-spacing:-0.052px;">Solution Explorer</span>
<span class="t s" style="left:664.3px;top:380px;font-size:5.92px;line-height:8px;color:#ececec;letter-spacing:-0.091px;">Team Explorer</span>
<div style="left:16.4px;top:309px;width:591.4px;height:81.4px;background:#2d2d30;"></div>
<div style="left:16.4px;top:309px;width:591.4px;height:10.4px;background:#007acc;"></div>
<span class="t s" style="left:17.6px;top:310px;font-size:6.01px;line-height:8px;color:#ffffff;letter-spacing:-0.069px;">Output</span>
<div style="left:39px;top:312.6px;width:540px;height:2.4px;background:radial-gradient(circle,#4aa3e6 0.35px,transparent 0.5px) 0 0/2.4px 2.4px,radial-gradient(circle,#4aa3e6 0.35px,transparent 0.5px) 1.2px 1.2px/2.4px 2.4px;"></div>
<svg style="left:583.5px;top:313.3px;" width="3.4" height="2.1" viewBox="0 0 3.4 2.1"><path d="M0 0 H3.4 L1.7 2 Z" fill="#ffffff"/></svg>
<svg style="left:591px;top:310.8px;" width="5" height="7" viewBox="0 0 5 7"><path d="M1.4 0.6 H3.6 V3.4 H1.4 Z M0.6 3.6 H4.4 M2.5 3.6 V6.6" fill="none" stroke="#ffffff" stroke-width="0.8"/></svg>
<svg style="left:598.6px;top:311.7px;" width="5.2" height="5.2" viewBox="0 0 5.2 5.2"><path d="M0.6 0.6 L4.6000000000000005 4.6000000000000005 M4.6000000000000005 0.6 L0.6 4.6000000000000005" stroke="#ffffff" stroke-width="1"/></svg>
<div style="left:16.4px;top:319.4px;width:591.4px;height:11.8px;background:#2d2d30;"></div>
<span class="t s" style="left:19.2px;top:322px;font-size:5.92px;line-height:8px;color:#ececec;letter-spacing:0.015px;">Show output from:</span>
<div style="left:70px;top:320.8px;width:147px;height:9.8px;background:#333337;border:0.5px solid #3a3a3e;box-sizing:border-box;"></div>
<span class="t s" style="left:72.8px;top:322px;font-size:5.92px;line-height:8px;color:#ececec;letter-spacing:0.092px;">Build</span>
<svg style="left:211.89999999999998px;top:324.90000000000003px;" width="2.6" height="2.1" viewBox="0 0 2.6 2.1"><path d="M0 0 H2.6 L1.3 2 Z" fill="#9a9a9a"/></svg>
<div style="left:220.8px;top:321.4px;width:0.7px;height:8.6px;background:#46464a;"></div>
<svg style="left:224.5px;top:322px;" width="8" height="8" viewBox="0 0 8 8"><rect x="2.4" y="0.8" width="4.4" height="5.6" fill="none" stroke="#d8d8d8" stroke-width="0.7"/><path d="M0.6 1.4 H3 M0.6 3 H3" stroke="#e05a4a" stroke-width="0.8"/></svg>
<svg style="left:240px;top:322px;" width="8" height="8" viewBox="0 0 8 8"><path d="M1 1.6 H6 M2.4 3.6 H6 M2.4 5.6 H6" stroke="#4c4c51" stroke-width="0.8"/></svg>
<div style="left:249.4px;top:321.4px;width:0.7px;height:8.6px;background:#46464a;"></div>
<svg style="left:253px;top:322px;" width="8" height="8" viewBox="0 0 8 8"><path d="M1 6 H7 M1 4 H7" stroke="#d8d8d8" stroke-width="0.8"/><path d="M1.2 2.6 L3 0.8 L4.8 2.6 M3 1 V3.4" stroke="#4ba0e8" stroke-width="0.9" fill="none"/></svg>
<svg style="left:263.6px;top:322px;" width="8" height="8" viewBox="0 0 8 8"><path d="M1 6 H7 M1 4 H7" stroke="#d8d8d8" stroke-width="0.8"/><path d="M1.2 1.2 L3 3 L4.8 1.2 M3 0.4 V2.8" stroke="#4ba0e8" stroke-width="0.9" fill="none"/></svg>
<div style="left:273.4px;top:321.4px;width:0.7px;height:8.6px;background:#46464a;"></div>
<svg style="left:277.6px;top:322px;" width="8" height="8" viewBox="0 0 8 8"><path d="M2.6 1.2 H7.4 M1 3 H7.4 M1 4.8 H7.4 M1 6.6 H7.4" stroke="#f0f0f0" stroke-width="0.9"/><path d="M0.6 1.6 L2 3 M2 1.6 L0.6 3" stroke="#e05a4a" stroke-width="0.7"/></svg>
<div style="left:287.4px;top:321.4px;width:0.7px;height:8.6px;background:#46464a;"></div>
<svg style="left:291.6px;top:322px;" width="8" height="8" viewBox="0 0 8 8"><path d="M1 2.2 H6 V5.4 H2 M1 2.2 V3.4 M3.2 4.2 L2 5.4 L3.2 6.6" fill="none" stroke="#d8d8d8" stroke-width="0.8"/></svg>
<div style="left:16.4px;top:331.2px;width:579.6px;height:40px;background:#1e1e1e;"></div>
<span class="t m" style="left:21.6px;top:332px;font-size:5.24px;line-height:8px;color:#f0f0f0;letter-spacing:-0.012px;">------ Build started: Project: Demo_01.Database, Configuration: Debug Any CPU ------</span>
<span class="t m" style="left:21.6px;top:340px;font-size:5.24px;line-height:8px;color:#f0f0f0;letter-spacing:-0.012px;">        Demo_01.Database -&gt; C:\Users\David.Hwang\source\repos\Demo_01\04 - Database\Demo_01.Database\Demo_01.Database\bin\Debug\Demo_01.Database.dll</span>
<span class="t m" style="left:21.6px;top:348px;font-size:5.24px;line-height:8px;color:#f0f0f0;letter-spacing:-0.012px;">        Demo_01.Database -&gt; C:\Users\David.Hwang\source\repos\Demo_01\04 - Database\Demo_01.Database\Demo_01.Database\bin\Debug\Demo_01.Database.dacpac</span>
<span class="t m" style="left:21.6px;top:356px;font-size:5.24px;line-height:8px;color:#f0f0f0;letter-spacing:-0.012px;">========== Build: 1 succeeded or up-to-date, 0 failed, 0 skipped ==========</span>
<div style="left:596px;top:331.2px;width:11.8px;height:47.6px;background:#3e3e42;"></div>
<svg style="left:599.2px;top:334.6px;" width="5" height="3" viewBox="0 0 5 3"><path d="M0.4 2.8 L2.5 0.3 L4.6 2.8 Z" fill="#999999"/></svg>
<div style="left:598.4px;top:341px;width:7.4px;height:9.4px;background:#7a7a7a;"></div>
<div style="left:596.4px;top:350.8px;width:11px;height:0.8px;background:#a8a8a8;"></div>
<svg style="left:599.2px;top:364.6px;" width="5" height="3" viewBox="0 0 5 3"><path d="M0.4 0.3 L2.5 2.8 L4.6 0.3 Z" fill="#999999"/></svg>
<div style="left:16.4px;top:371.2px;width:579.6px;height:7.6px;background:#3e3e42;"></div>
<svg style="left:18.2px;top:372.8px;" width="3" height="4.4" viewBox="0 0 3 4.4"><path d="M2.7 0.3 V4.1 L0.3 2.2 Z" fill="#c8c8c8"/></svg>
<div style="left:24px;top:373px;width:563.6px;height:4.2px;background:#686868;"></div>
<svg style="left:590.4px;top:372.8px;" width="3" height="4.4" viewBox="0 0 3 4.4"><path d="M0.3 0.3 V4.1 L2.7 2.2 Z" fill="#c8c8c8"/></svg>
<div style="left:16.4px;top:377.8px;width:591.4px;height:12.6px;background:#2d2d30;"></div>
<span class="t s" style="left:18px;top:380px;font-size:5.92px;line-height:8px;color:#ececec;letter-spacing:-0.007px;">Data Tools Operations</span>
<span class="t s" style="left:81.6px;top:380px;font-size:5.92px;line-height:8px;color:#ececec;letter-spacing:-0.117px;">Error List</span>
<div style="left:107.6px;top:377.8px;width:22.6px;height:10.8px;background:#252526;"></div>
<span class="t s" style="left:109.7px;top:380px;font-size:5.92px;line-height:8px;color:#1a97f0;letter-spacing:0.028px;">Output</span>
<div style="left:0px;top:390.6px;width:750px;height:12.4px;background:#007acc;"></div>
<svg style="left:1.6px;top:393.2px;" width="9" height="7" viewBox="0 0 9 7"><path d="M1.8 0.8 H8 L6.8 5.6 H0.6 Z" fill="none" stroke="#ffffff" stroke-width="0.8"/></svg>
<span class="t s" style="left:13.6px;top:393px;font-size:5.92px;line-height:8px;color:#ffffff;letter-spacing:-0.256px;">Ready</span>
<svg style="left:649.4px;top:394.4px;" width="5" height="6" viewBox="0 0 5 6"><path d="M2.5 5.6 V1.6 M0.8 3.1 L2.5 1.3 L4.2 3.1" fill="none" stroke="#ffffff" stroke-width="1"/></svg>
<span class="t s" style="left:658px;top:393px;font-size:5.92px;line-height:8px;color:#ffffff;letter-spacing:0.004px;">Add to Source Control</span>
<svg style="left:719.2px;top:395.6px;" width="4" height="3" viewBox="0 0 4 3"><path d="M0.3 2.6 L2 0.4 L3.7 2.6 Z" fill="#ffffff"/></svg>
<svg style="left:731.5px;top:392.6px;" width="8" height="8" viewBox="0 0 8 8"><path d="M1.2 5.6 C2.2 4.6 1.6 1 3.8 1 C6 1 5.4 4.6 6.4 5.6 Z" fill="#e8e8e8"/><circle cx="3.8" cy="6.6" r="0.8" fill="#e8e8e8"/></svg>
<div style="left:736.4px;top:395.4px;width:5.6px;height:5.6px;background:#e51400;border-radius:50%;"></div>
<span class="t s" style="left:738.3px;top:395px;font-size:3.8px;line-height:8px;color:#ffffff;">2</span>
<div style="left:219.6px;top:110.6px;width:116px;height:178px;background:rgba(0,0,0,0.22);"></div>
<div style="left:220.7px;top:111.6px;width:114px;height:175.6px;background:#f0f0f0;border:0.5px solid #8f8f8f;box-sizing:border-box;"></div>
<div style="left:221.2px;top:112px;width:113px;height:12.8px;background:#ffffff;"></div>
<span class="t s" style="left:225px;top:114px;font-size:6.01px;line-height:8px;color:#9c9c9c;letter-spacing:-0.144px;">Publish Database Demo_01.Database.publ</span>
<div style="left:227.2px;top:137.6px;width:110px;height:104.4px;border:0.6px solid #dadada;box-sizing:border-box;"></div>
<div style="left:230.4px;top:133px;width:67px;height:9px;background:#f0f0f0;"></div>
<span class="t s" style="left:231.6px;top:133px;font-size:6.01px;line-height:8px;color:#000000;letter-spacing:-0.116px;">Target Database Settings</span>
<span class="t s" style="left:236px;top:148px;font-size:6.01px;line-height:8px;color:#000000;letter-spacing:-0.118px;"><u>T</u>arget database connection:</span>
<div style="left:233.3px;top:157.4px;width:103px;height:11.2px;background:#e9e9e9;border:0.6px solid #c4c4c4;box-sizing:border-box;"></div>
<span class="t s" style="left:235.2px;top:159px;font-size:5.92px;line-height:8px;color:#000000;letter-spacing:-0.012px;">Data Source=.;Integrated Security=Tru</span>
<span class="t s" style="left:236px;top:171px;font-size:6.01px;line-height:8px;color:#000000;letter-spacing:-0.218px;">Database <u>n</u>ame:</span>
<div style="left:233.3px;top:181px;width:103px;height:9.8px;background:#ffffff;border:0.6px solid #a6a6a6;box-sizing:border-box;"></div>
<span class="t s" style="left:235.2px;top:182px;font-size:5.92px;line-height:8px;color:#000000;letter-spacing:-0.201px;">Demo_01</span>
<span class="t s" style="left:236px;top:194px;font-size:6.01px;line-height:8px;color:#000000;letter-spacing:-0.172px;">Publish <u>s</u>cript name:</span>
<div style="left:233.3px;top:204px;width:103px;height:9.8px;background:#ffffff;border:0.6px solid #a6a6a6;box-sizing:border-box;"></div>
<span class="t s" style="left:235.2px;top:205px;font-size:5.92px;line-height:8px;color:#000000;letter-spacing:-0.127px;">Demo_01.Database.sql</span>
<div style="left:235.2px;top:217.6px;width:6.8px;height:6.6px;background:#ffffff;border:0.6px solid #444444;box-sizing:border-box;"></div>
<span class="t s" style="left:244.6px;top:217px;font-size:6.01px;line-height:8px;color:#000000;letter-spacing:-0.027px;"><u>R</u>egister as a Data-tier Application</span>
<div style="left:245px;top:228px;width:6.4px;height:6.4px;background:#ffffff;border:0.6px solid #cfcfcf;box-sizing:border-box;"></div>
<span class="t s" style="left:254px;top:227px;font-size:6.01px;line-height:8px;color:#a8a8a8;letter-spacing:-0.074px;"><u>B</u>lock publish when database h</span>
<div style="left:229.3px;top:247.3px;width:42.4px;height:13.2px;background:#e1e1e1;border:0.7px solid #adadad;box-sizing:border-box;"></div>
<span class="t s" style="left:232.8px;top:250px;font-size:6.01px;line-height:8px;color:#000000;letter-spacing:-0.135px;"><u>L</u>oad Profile...</span>
<div style="left:229.3px;top:265.3px;width:42.4px;height:12.4px;background:#cccccc;border:0.7px solid #bfbfbf;box-sizing:border-box;"></div>
<span class="t s" style="left:235px;top:268px;font-size:6.01px;line-height:8px;color:#a2a2a2;letter-spacing:-0.147px;">Save Pr<u>o</u>file</span>
<div style="left:275.2px;top:265.3px;width:50.6px;height:12.4px;background:#e1e1e1;border:1px solid #0078d7;box-sizing:border-box;"></div>
<span class="t s" style="left:279px;top:268px;font-size:6.01px;line-height:8px;color:#000000;letter-spacing:-0.161px;">Save <u>P</u>rofile As...</span>
<div style="left:331.6px;top:71.4px;width:374.6px;height:237px;background:rgba(0,0,0,0.10);"></div>
<div style="left:333px;top:72.6px;width:371.6px;height:233.8px;background:rgba(0,0,0,0.16);"></div>
<div style="left:334.4px;top:73.6px;width:369px;height:231.6px;background:#ffffff;"></div>
<span class="t s" style="left:338px;top:77px;font-size:6.1px;line-height:8px;color:#000000;letter-spacing:-0.473px;">Save</span>
<svg style="left:692.6px;top:78.6px;" width="5.4" height="5.4" viewBox="0 0 5.4 5.4"><path d="M0.6 0.6 L4.800000000000001 4.800000000000001 M4.800000000000001 0.6 L0.6 4.800000000000001" stroke="#2a2a2a" stroke-width="0.7"/></svg>
<svg style="left:340px;top:95px;" width="7" height="7" viewBox="0 0 7 7"><path d="M6.2 3 H0.8 M3 0.8 L0.8 3 L3 5.2" fill="none" stroke="#c4c4c4" stroke-width="0.7"/></svg>
<svg style="left:354.6px;top:95px;" width="7" height="7" viewBox="0 0 7 7"><path d="M0.8 3 H6.2 M4 0.8 L6.2 3 L4 5.2" fill="none" stroke="#c4c4c4" stroke-width="0.7"/></svg>
<svg style="left:368.6px;top:96.6px;" width="4" height="3" viewBox="0 0 4 3"><path d="M0.4 0.5 L2 2.2 L3.6 0.5" fill="none" stroke="#bdbdbd" stroke-width="0.6"/></svg>
<svg style="left:376.6px;top:94.6px;" width="7" height="7" viewBox="0 0 7 7"><path d="M3.5 6.4 V0.8 M1.2 3 L3.5 0.7 L5.8 3" fill="none" stroke="#555555" stroke-width="0.7"/></svg>
<div style="left:387.4px;top:90.2px;width:267px;height:15.2px;background:#ffffff;border:0.6px solid #d9d9d9;box-sizing:border-box;"></div>
<svg style="left:389.8px;top:94.4px;" width="4.6" height="6.4" viewBox="0 0 4.6 6.4"><path d="M0.3 0.3 H3 L3.4 0.9 H4.3 V6 H0.3 Z" fill="#ffdb6b"/><path d="M3.5 0.9 H4.3 V6 H3.5 Z" fill="#ecb93a"/></svg>
<span class="t s" style="left:398.6px;top:94px;font-size:5.46px;line-height:8px;color:#555555;letter-spacing:-0.047px;">«</span>
<span class="t s" style="left:405.8px;top:94px;font-size:5.92px;line-height:8px;color:#000000;letter-spacing:-0.134px;">Demo_01.Database</span>
<svg style="left:460.4px;top:96.2px;" width="3" height="4" viewBox="0 0 3 4"><path d="M0.6 0.4 L2.2 2 L0.6 3.6" fill="none" stroke="#6a6a6a" stroke-width="0.6"/></svg>
<span class="t s" style="left:466.6px;top:94px;font-size:5.92px;line-height:8px;color:#000000;letter-spacing:-0.122px;">Demo_01.Database</span>
<svg style="left:521.6px;top:96.2px;" width="3" height="4" viewBox="0 0 3 4"><path d="M0.6 0.4 L2.2 2 L0.6 3.6" fill="none" stroke="#6a6a6a" stroke-width="0.6"/></svg>
<svg style="left:567.6px;top:96.6px;" width="5" height="4" viewBox="0 0 5 4"><path d="M0.5 0.6 L2.5 2.8 L4.5 0.6" fill="none" stroke="#555" stroke-width="0.7"/></svg>
<div style="left:578.4px;top:90.2px;width:0.6px;height:15.2px;background:#d9d9d9;"></div>
<svg style="left:583px;top:94.6px;" width="7" height="7" viewBox="0 0 7 7"><path d="M5.6 3.6 A2.3 2.3 0 1 1 4.4 1.5" fill="none" stroke="#555" stroke-width="0.7"/><path d="M3.6 0.4 L5.2 1.6 L3.6 2.6" fill="none" stroke="#555" stroke-width="0.6"/></svg>
<div style="left:599.2px;top:90.2px;width:99.4px;height:15.2px;background:#ffffff;border:0.6px solid #d9d9d9;box-sizing:border-box;"></div>
<svg style="left:606px;top:95.4px;" width="6" height="6" viewBox="0 0 6 6"><circle cx="3.6" cy="2.2" r="1.7" fill="none" stroke="#8a8a8a" stroke-width="0.6"/><path d="M2.4 3.4 L0.6 5.4" stroke="#8a8a8a" stroke-width="0.6"/></svg>
<span class="t s" style="left:619.6px;top:94px;font-size:5.92px;line-height:8px;color:#6d6d6d;letter-spacing:-0.152px;">Search Demo_01.Database</span>
<div style="left:334.4px;top:108.6px;width:369px;height:14.8px;background:#f5f6f7;"></div>
<div style="left:334.4px;top:123.2px;width:369px;height:0.5px;background:#e8e8e8;"></div>
<span class="t s" style="left:343px;top:112px;font-size:6.01px;line-height:8px;color:#1e3a6e;letter-spacing:-0.045px;">Organize</span>
<svg style="left:369.3px;top:115.5px;" width="2.6" height="2.1" viewBox="0 0 2.6 2.1"><path d="M0 0 H2.6 L1.3 2 Z" fill="#1e3a6e"/></svg>
<span class="t s" style="left:386.2px;top:112px;font-size:6.01px;line-height:8px;color:#1e3a6e;letter-spacing:0.031px;">New folder</span>
<svg style="left:657.6px;top:112.6px;" width="8" height="7" viewBox="0 0 8 7"><g stroke="#8a8a8a" stroke-width="0.6"><path d="M2.4 1 H7.4 M2.4 3.2 H7.4 M2.4 5.4 H7.4"/></g><g fill="#c96a4a"><rect x="0.4" y="0.5" width="1.2" height="1.1"/><rect x="0.4" y="2.7" width="1.2" height="1.1"/><rect x="0.4" y="4.9" width="1.2" height="1.1"/></g></svg>
<svg style="left:670.1px;top:115.3px;" width="2.6" height="2.1" viewBox="0 0 2.6 2.1"><path d="M0 0 H2.6 L1.3 2 Z" fill="#333333"/></svg>
<div style="left:687.6px;top:111.8px;width:8.4px;height:8.4px;background:#1569c7;border-radius:50%;"></div>
<span class="t s" style="left:690.3px;top:112px;font-size:5.46px;line-height:8px;color:#ffffff;font-weight:bold;">?</span>
<div style="left:335px;top:226px;width:67.6px;height:10.6px;background:#d9d9d9;"></div>
<svg style="left:350.6px;top:127px;" width="7" height="6" viewBox="0 0 7 6"><rect x="0.3" y="0.3" width="6.4" height="5" fill="#dfeaf5" stroke="#7d8b99" stroke-width="0.5"/><path d="M0.6 4.8 L2.6 2.8 L4 4 L5 3.2 L6.4 4.8 Z" fill="#4a8fd0"/></svg>
<span class="t s" style="left:359.8px;top:126px;font-size:5.92px;line-height:8px;color:#000000;letter-spacing:-0.043px;">Pictures</span>
<svg style="left:396px;top:127.6px;" width="5" height="5" viewBox="0 0 5 5"><path d="M2.6 0.6 L4.4 2.4 L3.4 2.8 L2.6 3.8 L1.2 2.4 L2.2 1.6 Z M1.8 3.2 L0.6 4.4" fill="#9a9a9a" stroke="#9a9a9a" stroke-width="0.4"/></svg>
<svg style="left:351.6px;top:138.6px;" width="4.6" height="6.4" viewBox="0 0 4.6 6.4"><path d="M0.3 0.3 H3 L3.4 0.9 H4.3 V6 H0.3 Z" fill="#ffdb6b"/><path d="M3.5 0.9 H4.3 V6 H3.5 Z" fill="#ecb93a"/></svg>
<span class="t s" style="left:359.8px;top:138px;font-size:5.92px;line-height:8px;color:#000000;letter-spacing:-0.183px;">Boot Track</span>
<svg style="left:351.6px;top:150.2px;" width="4.6" height="6.4" viewBox="0 0 4.6 6.4"><path d="M0.3 0.3 H3 L3.4 0.9 H4.3 V6 H0.3 Z" fill="#ffdb6b"/><path d="M3.5 0.9 H4.3 V6 H3.5 Z" fill="#ecb93a"/></svg>
<span class="t s" style="left:359.8px;top:150px;font-size:5.92px;line-height:8px;color:#000000;letter-spacing:0.000px;width:42.6px;overflow:hidden;">Boot Track_main</span>
<svg style="left:351.6px;top:161.8px;" width="4.6" height="6.4" viewBox="0 0 4.6 6.4"><path d="M0.3 0.3 H3 L3.4 0.9 H4.3 V6 H0.3 Z" fill="#ffdb6b"/><path d="M3.5 0.9 H4.3 V6 H3.5 Z" fill="#ecb93a"/></svg>
<span class="t s" style="left:359.8px;top:161px;font-size:5.92px;line-height:8px;color:#000000;letter-spacing:-0.201px;">Demo_01</span>
<svg style="left:351.6px;top:173.3px;" width="4.6" height="6.4" viewBox="0 0 4.6 6.4"><path d="M0.3 0.3 H3 L3.4 0.9 H4.3 V6 H0.3 Z" fill="#ffdb6b"/><path d="M3.5 0.9 H4.3 V6 H3.5 Z" fill="#ecb93a"/></svg>
<span class="t s" style="left:359.8px;top:173px;font-size:5.92px;line-height:8px;color:#000000;width:42.6px;overflow:hidden;letter-spacing:-0.25px;">Demo_01.Database</span>
<svg style="left:346px;top:188.6px;" width="8" height="8" viewBox="0 0 8 8"><path d="M5.6 0.6 L7.4 1.4 V6.6 L5.6 7.4 L2.4 4.6 L1 5.8 L0.5 5.5 V2.5 L1 2.2 L2.4 3.4 Z M5.6 2.6 L3.6 4 L5.6 5.4 Z" fill="#7b4fc9" fill-rule="evenodd"/></svg>
<span class="t s" style="left:355.8px;top:189px;font-size:5.92px;line-height:8px;color:#000000;width:46.6px;overflow:hidden;letter-spacing:-0.2px;">Microsoft Visual Studio</span>
<svg style="left:346.4px;top:204.6px;" width="7.4" height="6.6" viewBox="0 0 7.4 6.6"><rect x="0.2" y="0.4" width="7" height="5" rx="0.5" fill="#2f9bea"/><rect x="0.2" y="0.4" width="7" height="1.4" fill="#54b5f5"/></svg>
<span class="t s" style="left:355.8px;top:204px;font-size:5.92px;line-height:8px;color:#000000;letter-spacing:0.161px;">Desktop</span>
<svg style="left:349.8px;top:216.6px;" width="8" height="6" viewBox="0 0 8 6"><path d="M1.8 5.2 A1.6 1.6 0 0 1 2 2.2 A2.2 2.2 0 0 1 6 1.8 A1.8 1.8 0 0 1 6.4 5.2 Z" fill="#1373d1"/></svg>
<span class="t s" style="left:359.8px;top:216px;font-size:5.92px;line-height:8px;color:#000000;width:42.6px;overflow:hidden;letter-spacing:-0.2px;">OneDrive - Perficient</span>
<svg style="left:351px;top:227.6px;" width="6" height="7" viewBox="0 0 6 7"><rect x="0.3" y="0.8" width="4.6" height="5.6" fill="#f2c94c"/><circle cx="3.4" cy="2.6" r="1.2" fill="#5a4a3a"/><path d="M1.4 6.4 C1.4 3.8 5.4 3.8 5.4 6.4 Z" fill="#3a9a5a"/></svg>
<span class="t s" style="left:359.8px;top:227px;font-size:5.92px;line-height:8px;color:#000000;letter-spacing:0.133px;">David Hwang</span>
<svg style="left:350.6px;top:239.4px;" width="8" height="6" viewBox="0 0 8 6"><path d="M0.6 0.6 L6.4 1.6 V5 L0.6 4 Z" fill="#2f9bea"/><path d="M2 5.6 H6" stroke="#1a6cb0" stroke-width="0.6"/></svg>
<span class="t s" style="left:359.8px;top:239px;font-size:5.92px;line-height:8px;color:#000000;letter-spacing:-0.059px;">This PC</span>
<div style="left:403.4px;top:124px;width:6.8px;height:121.4px;background:#f0f0f0;"></div>
<svg style="left:404.4px;top:127.2px;" width="5" height="4" viewBox="0 0 5 4"><path d="M0.6 3 L2.5 1 L4.4 3" fill="none" stroke="#555" stroke-width="0.8"/></svg>
<div style="left:403.6px;top:147px;width:6.4px;height:36px;background:#c2c2c2;"></div>
<svg style="left:404.4px;top:237.6px;" width="5" height="4" viewBox="0 0 5 4"><path d="M0.6 1 L2.5 3 L4.4 1" fill="none" stroke="#555" stroke-width="0.8"/></svg>
<div style="left:411px;top:124px;width:0.5px;height:121.4px;background:#f2f2f2;"></div>
<svg style="left:479.6px;top:123.6px;" width="5" height="3" viewBox="0 0 5 3"><path d="M0.6 2.4 L2.5 0.6 L4.4 2.4" fill="none" stroke="#9a9a9a" stroke-width="0.5"/></svg>
<span class="t s" style="left:421.4px;top:126px;font-size:6.01px;line-height:8px;color:#4c607a;letter-spacing:0.046px;">Name</span>
<div style="left:545.6px;top:124px;width:0.5px;height:13px;background:#e5e5e5;"></div>
<div style="left:616.6px;top:124px;width:0.5px;height:13px;background:#e5e5e5;"></div>
<div style="left:675.4px;top:124px;width:0.5px;height:13px;background:#e5e5e5;"></div>
<span class="t s" style="left:548.8px;top:126px;font-size:6.01px;line-height:8px;color:#4c607a;letter-spacing:0.028px;">Date modified</span>
<span class="t s" style="left:619.2px;top:126px;font-size:6.01px;line-height:8px;color:#4c607a;letter-spacing:-0.154px;">Type</span>
<span class="t s" style="left:678px;top:126px;font-size:6.01px;line-height:8px;color:#4c607a;letter-spacing:-0.068px;">Size</span>
<svg style="left:422.8px;top:141.6px;" width="4.6" height="6.4" viewBox="0 0 4.6 6.4"><path d="M0.3 0.3 H3 L3.4 0.9 H4.3 V6 H0.3 Z" fill="#ffdb6b"/><path d="M3.5 0.9 H4.3 V6 H3.5 Z" fill="#ecb93a"/></svg>
<span class="t s" style="left:432px;top:141px;font-size:5.92px;line-height:8px;color:#000000;letter-spacing:-0.164px;">bin</span>
<span class="t s" style="left:548.8px;top:141px;font-size:5.92px;line-height:8px;color:#6d6d6d;letter-spacing:-0.101px;">8/18/2020 6:40 PM</span>
<span class="t s" style="left:619.2px;top:141px;font-size:5.92px;line-height:8px;color:#6d6d6d;letter-spacing:0.060px;">File folder</span>
<svg style="left:422.8px;top:152.2px;" width="4.6" height="6.4" viewBox="0 0 4.6 6.4"><path d="M0.3 0.3 H3 L3.4 0.9 H4.3 V6 H0.3 Z" fill="#ffdb6b"/><path d="M3.5 0.9 H4.3 V6 H3.5 Z" fill="#ecb93a"/></svg>
<span class="t s" style="left:432px;top:152px;font-size:5.92px;line-height:8px;color:#000000;letter-spacing:-0.030px;">obj</span>
<span class="t s" style="left:548.8px;top:152px;font-size:5.92px;line-height:8px;color:#6d6d6d;letter-spacing:-0.101px;">8/18/2020 6:33 PM</span>
<span class="t s" style="left:619.2px;top:152px;font-size:5.92px;line-height:8px;color:#6d6d6d;letter-spacing:0.060px;">File folder</span>
<svg style="left:422.8px;top:162.6px;" width="4.6" height="6.4" viewBox="0 0 4.6 6.4"><path d="M0.3 0.3 H3 L3.4 0.9 H4.3 V6 H0.3 Z" fill="#ffdb6b"/><path d="M3.5 0.9 H4.3 V6 H3.5 Z" fill="#ecb93a"/></svg>
<span class="t s" style="left:432px;top:162px;font-size:5.92px;line-height:8px;color:#000000;letter-spacing:0.077px;">Scripts</span>
<span class="t s" style="left:548.8px;top:162px;font-size:5.92px;line-height:8px;color:#6d6d6d;letter-spacing:-0.101px;">8/18/2020 9:55 PM</span>
<span class="t s" style="left:619.2px;top:162px;font-size:5.92px;line-height:8px;color:#6d6d6d;letter-spacing:0.060px;">File folder</span>
<svg style="left:422.8px;top:173.2px;" width="4.6" height="6.4" viewBox="0 0 4.6 6.4"><path d="M0.3 0.3 H3 L3.4 0.9 H4.3 V6 H0.3 Z" fill="#ffdb6b"/><path d="M3.5 0.9 H4.3 V6 H3.5 Z" fill="#ecb93a"/></svg>
<span class="t s" style="left:432px;top:173px;font-size:5.92px;line-height:8px;color:#000000;letter-spacing:0.054px;">Tables</span>
<span class="t s" style="left:548.8px;top:173px;font-size:5.92px;line-height:8px;color:#6d6d6d;letter-spacing:-0.101px;">8/18/2020 9:56 PM</span>
<span class="t s" style="left:619.2px;top:173px;font-size:5.92px;line-height:8px;color:#6d6d6d;letter-spacing:0.060px;">File folder</span>
<svg style="left:422.8px;top:183.8px;" width="5" height="6.6" viewBox="0 0 5 6.6"><path d="M0.4 0.4 H3.2 L4.6 1.8 V6.2 H0.4 Z" fill="#ffffff" stroke="#8a8a8a" stroke-width="0.5"/><path d="M3.2 0.4 V1.8 H4.6" fill="none" stroke="#8a8a8a" stroke-width="0.4"/></svg>
<span class="t s" style="left:432px;top:184px;font-size:5.92px;line-height:8px;color:#000000;letter-spacing:-0.121px;">Demo_01.Database.publish</span>
<span class="t s" style="left:548.8px;top:184px;font-size:5.92px;line-height:8px;color:#6d6d6d;letter-spacing:-0.076px;">8/18/2020 10:11 PM</span>
<span class="t s" style="left:619.2px;top:184px;font-size:5.92px;line-height:8px;color:#6d6d6d;letter-spacing:-0.007px;">XML Document</span>
<span class="t s" style="left:699.4px;top:184px;font-size:5.92px;line-height:8px;color:#6d6d6d;">1</span>
<div style="left:411.4px;top:238px;width:292px;height:7.4px;background:#f0f0f0;"></div>
<svg style="left:414.4px;top:239.6px;" width="4" height="4.4" viewBox="0 0 4 4.4"><path d="M2.8 0.5 L1 2.2 L2.8 3.9" fill="none" stroke="#555" stroke-width="0.8"/></svg>
<div style="left:421px;top:238.4px;width:259.6px;height:6.6px;background:#cdcdcd;"></div>
<svg style="left:697.4px;top:239.6px;" width="4" height="4.4" viewBox="0 0 4 4.4"><path d="M1.2 0.5 L3 2.2 L1.2 3.9" fill="none" stroke="#555" stroke-width="0.8"/></svg>
<div style="left:334.4px;top:245.4px;width:369px;height:59.8px;background:#f0f0f0;"></div>
<span class="t s" style="left:367.2px;top:252px;font-size:6.01px;line-height:8px;color:#000000;letter-spacing:-0.222px;">File name:</span>
<div style="left:396px;top:250.4px;width:304.8px;height:11.4px;background:#ffffff;border:0.7px solid #7ab0e6;box-sizing:border-box;"></div>
<div style="left:398px;top:252.2px;width:71.4px;height:7.8px;background:#0078d7;"></div>
<span class="t s" style="left:398.6px;top:252px;font-size:5.92px;line-height:8px;color:#ffffff;letter-spacing:-0.113px;">Demo_01.Database.publish</span>
<svg style="left:692.6px;top:254.4px;" width="5" height="4" viewBox="0 0 5 4"><path d="M0.5 0.8 L2.5 2.8 L4.5 0.8" fill="none" stroke="#555" stroke-width="0.7"/></svg>
<span class="t s" style="left:360px;top:264px;font-size:6.01px;line-height:8px;color:#000000;letter-spacing:-0.258px;">Save as type:</span>
<div style="left:396px;top:263.2px;width:304.8px;height:10.8px;background:#e3e3e3;border:0.7px solid #c2c2c2;box-sizing:border-box;"></div>
<span class="t s" style="left:398.6px;top:265px;font-size:5.92px;line-height:8px;color:#000000;letter-spacing:0.015px;">Publish files (*.publish.xml)</span>
<svg style="left:692.6px;top:266.6px;" width="5" height="4" viewBox="0 0 5 4"><path d="M0.5 0.8 L2.5 2.8 L4.5 0.8" fill="none" stroke="#555" stroke-width="0.7"/></svg>
<svg style="left:339.6px;top:293px;" width="5" height="4" viewBox="0 0 5 4"><path d="M0.6 3 L2.5 1 L4.4 3" fill="none" stroke="#333" stroke-width="0.8"/></svg>
<span class="t s" style="left:348px;top:291px;font-size:6.01px;line-height:8px;color:#000000;letter-spacing:-0.285px;">Hide Folders</span>
<div style="left:604.2px;top:286.8px;width:42px;height:12px;background:#e1e1e1;border:1px solid #0078d7;box-sizing:border-box;"></div>
<span class="t s" style="left:618.6px;top:289px;font-size:6.01px;line-height:8px;color:#000000;letter-spacing:-0.222px;">Save</span>
<div style="left:653px;top:286.8px;width:42.2px;height:12px;background:#e1e1e1;border:0.7px solid #adadad;box-sizing:border-box;"></div>
<span class="t s" style="left:664.6px;top:289px;font-size:6.01px;line-height:8px;color:#000000;letter-spacing:0.119px;">Cancel</span>
<svg style="left:698.4px;top:300.2px;" width="4.4" height="4.4" viewBox="0 0 4.4 4.4"><g fill="#a8a8a8"><rect x="3.2" y="0.4" width="0.7" height="0.7"/><rect x="1.8" y="1.8" width="0.7" height="0.7"/><rect x="3.2" y="1.8" width="0.7" height="0.7"/><rect x="0.4" y="3.2" width="0.7" height="0.7"/><rect x="1.8" y="3.2" width="0.7" height="0.7"/><rect x="3.2" y="3.2" width="0.7" height="0.7"/></g></svg>
</div></body></html>
